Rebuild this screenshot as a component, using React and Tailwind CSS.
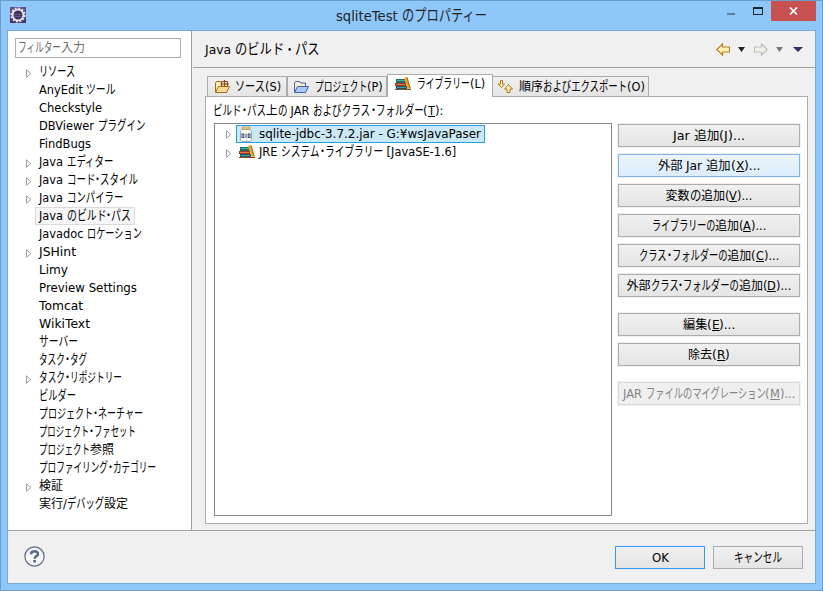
import { useLayoutEffect, useRef } from "react";

const kindOf = (s, wideDot) =>
  s === "・" ? (wideDot ? "k" : "d")
  : /^[\u3040-\u30ff]/.test(s) ? "k"
  : /^[\u4e00-\u9fff]/.test(s) ? "h" : "l";

const DOT = 5;

// Text set to a given advance width; kana runs are narrowed before anything else.
function Fit({ text, w, latin = 0.95, wideDot = false, className = "" }) {
  const ref = useRef(null);
  const runs = text.match(/・|[\u3040-\u30fa\u30fc-\u30ff]+|[\u4e00-\u9fff]+|_.|[^\u3040-\u30ff\u4e00-\u9fff_]+/g);
  useLayoutEffect(() => {
    const data = [...ref.current.children].map((o, i) => {
      o.style.width = "auto";
      o.firstChild.style.transform = "none";
      return { o, kind: kindOf(runs[i], wideDot), n: o.firstChild.getBoundingClientRect().width };
    });
    const sum = (k) => data.filter((d) => d.kind === k).reduce((a, d) => a + d.n, 0);
    const K = sum("k"), H = sum("h"), L = sum("l");
    const dots = data.filter((d) => d.kind === "d").length * DOT;
    const scale = K > 0
      ? { k: (w - dots - H - L * latin) / K, h: 1, l: latin }
      : { k: 1, h: w / (H + L), l: w / (H + L) };
    data.forEach(({ o, kind, n }) => {
      const s = kind === "d" ? DOT / n : scale[kind];
      o.style.width = n * s + "px";
      o.firstChild.style.transform = `scaleX(${s})`;
    });
  }, [text, w, latin, wideDot]);
  return (
    <span ref={ref} className={"inline-flex shrink-0 items-baseline whitespace-pre " + className}>
      {runs.map((r, i) => (
        <span key={i} className="inline-block">
          <span
            className={
              "inline-block origin-left " +
              (r[0] === "_" ? "underline underline-offset-1 " : "") +
              (kindOf(r) === "k" ? "text-[1.1em]" : "") +
              (kindOf(r, wideDot) === "d" ? "[font-feature-settings:'halt']" : "")
            }
          >
            {r.replace("_", "")}
          </span>
        </span>
      ))}
    </span>
  );
}

const tree = [
  ["リソース", 36, 1], ["AnyEdit ツール", 77], ["Checkstyle", 63], ["DBViewer プラグイン", 106],
  ["FindBugs", 52], ["Java エディター", 74, 1], ["Java コード・スタイル", 99, 1],
  ["Java コンパイラー", 84, 1], ["Java のビルド・パス", 92, 0, 1], ["Javadoc ロケーション", 103],
  ["JSHint", 37, 1], ["Limy", 29], ["Preview Settings", 98], ["Tomcat", 44], ["WikiText", 51],
  ["サーバー", 39], ["タスク・タグ", 48], ["タスク・リポジトリー", 83, 1], ["ビルダー", 37],
  ["プロジェクト・ネーチャー", 104], ["プロジェクト・ファセット", 97], ["プロジェクト参照", 75],
  ["プロファイリング・カテゴリー", 117], ["検証", 24, 1], ["実行/デバッグ設定", 89],
];

function Twisty() {
  return (
    <svg width="6" height="9" viewBox="0 0 6 9" className="shrink-0">
      <path d="M.5 .8v7.4L4.8 4.5z" fill="#fff" stroke="#a0a0a0" />
    </svg>
  );
}

function EclipseIcon() {
  return (
    <svg width="16" height="16" viewBox="0 0 16 16">
      <rect width="16" height="16" fill="#5f4d8c" />
      <path d="M0 11h16v5H0z" fill="#47336f" />
      <circle cx="8" cy="8" r="6.8" fill="none" stroke="#e6e4e4" strokeWidth="1.6" strokeDasharray="2 1.56" />
      <circle cx="8" cy="8" r="5.4" fill="#3b3162" stroke="#e8e6e2" strokeWidth="1.8" />
      <path d="M4 7.500h8M4.500 9.500h7" stroke="#665d92" strokeWidth="1" />
    </svg>
  );
}

function Folder({ blue, pack }) {
  const edge = blue ? "#4a62a5" : "#a8691c";
  return (
    <svg width="16" height="16" viewBox="0 0 16 16" className="shrink-0">
      <path d="M1.500 13V4l1-1.500h4l1 1.500h5v9z" fill={blue ? "#f6efcf" : "#fdeec0"} stroke={edge} />
      {pack && (
        <g>
          <path d="M7.500 2.500h6v5h-6z" fill="#f6d79a" stroke="#7e4a2c" />
          <path d="M10.500 1v7M6.500 5H15" stroke="#7e4a2c" />
        </g>
      )}
      <path d="M1.500 13.500L4.500 7.500h11l-3 6z" fill={blue ? "#a9c9f4" : "#fbdc95"} stroke={edge} />
    </svg>
  );
}

function Books() {
  return (
    <svg width="16" height="14" viewBox="0 0 16 14" className="shrink-0">
      <path d="M1 2h10v4H1z" fill="#1d7068" />
      <path d="M2 3h8v1H2z" fill="#4fae9c" />
      <path d="M0 6h11v3H0z" fill="#a8341c" />
      <path d="M1 7h9v1H1z" fill="#e07a4a" />
      <path d="M1 9h11v3H1z" fill="#1c5a66" />
      <path d="M2 10h9v1H2z" fill="#4d9c9c" />
      <path d="M9 1l3-1 3.500 11.500-3 .5z" fill="#eda52e" />
      <path d="M12 .5l3.200 11" stroke="#a35d10" />
      <path d="M0 12h16v1H0z" fill="#8a4a26" />
    </svg>
  );
}

function Jar() {
  return (
    <svg width="14" height="16" viewBox="0 0 14 16" className="shrink-0">
      <path d="M3 3.500h8l1.500 2v8.500l-1.500 1.500H3L1.500 14V5.500z" fill="#fbfbf6" stroke="#9aa7b8" />
      <path d="M3 1h8v2H3z" fill="#f0d58c" stroke="#c49c48" strokeWidth=".8" />
      <g fill="none" stroke="#24365c" strokeWidth=".9">
        <rect x="3" y="8" width="1.800" height="3.500" />
        <path d="M7 7.500V12" />
        <rect x="9.200" y="8" width="1.800" height="3.500" />
      </g>
    </svg>
  );
}

function OrderIcon() {
  return (
    <svg width="16" height="16" viewBox="0 0 16 16" className="shrink-0">
      <g fill="#fdeab0" stroke="#b87a1c">
        <path d="M3.500 1.500h2V5h2L4.500 8.500 1 5h2.500z" />
        <path d="M10 13.500h3V10h2.500L11.500 5.500 7.500 10H10z" />
      </g>
    </svg>
  );
}

function Arrow({ right }) {
  return (
    <svg width="14" height="13" viewBox="0 0 14 13" className={"shrink-0 " + (right ? "-scale-x-100" : "")}>
      <path d="M6.500 .9v3.100h7v5h-7v3.100L.8 6.500z" fill={right ? "#f2f2ec" : "#fdf0b8"} stroke={right ? "#bdbdb5" : "#b8801c"} strokeWidth="1.200" />
    </svg>
  );
}

function Caret({ color, size = 7 }) {
  return (
    <svg width={size} height="5" viewBox="0 0 8 5" preserveAspectRatio="none" className="shrink-0">
      <path d="M0 0h8L4 5z" fill={color} />
    </svg>
  );
}

const base = "flex shrink-0 items-center justify-center border ";
const grey = "border-[#acacac] bg-linear-to-b from-[#f0f0f0] to-[#e5e5e5] ";

function SideButton({ text, w, kind = "", gap = "mt-[7px]" }) {
  const look =
    kind === "hot" ? "border-[#7eb4ea] bg-linear-to-b from-[#ecf4fc] to-[#dcecfc]"
    : kind === "off" ? "border-[#d9d9d9] bg-[#efefef] text-[#838383]"
    : grey;
  return (
    <div className={base + "h-[23px] w-[182px] outline outline-[#f0f0f0] " + gap + " " + look}>
      <Fit text={text} w={w} />
    </div>
  );
}

function Tab({ icon, text, w, className }) {
  return (
    <div className={"flex shrink-0 items-center border border-b-0 border-[#acacac] " + className}>
      {icon}
      <Fit text={text} w={w} />
    </div>
  );
}

const idle = "h-5 bg-linear-to-b from-[#f0f0f0] to-[#e5e5e5] ";

export default function App() {
  return (
    <div className="flex h-[591px] w-[823px] flex-col overflow-hidden border border-[#6c9dcb] bg-[#8ec8fb] font-['DejaVu_Sans','Noto_Sans_CJK_JP',sans-serif] text-[12px] leading-[18px] text-black">
      <header className="flex h-[29px] shrink-0 items-start">
        <div className="mt-1.5 ml-[9px] w-[326px]"><EclipseIcon /></div>
        <Fit text="sqliteTest のプロパティー" w={151} latin={0.94} className="mt-1.5 text-[14px] text-[#222]" />
        <div className="ml-auto flex h-5 items-start">
          <div className="mt-3 mr-[18px] h-0.5 w-2 bg-[#5d7f9f]" />
          <div className="mt-1.5 mr-2 h-2 w-2.5 border border-t-2 border-[#1c2831]" />
          <div className="mr-1.5 flex h-5 w-[45px] items-center justify-center bg-[#c75050]">
            <svg width="9" height="8" viewBox="0 0 9 8"><path d="M1 .5l7 7M8 .5l-7 7" stroke="#fff" strokeWidth="1.700" /></svg>
          </div>
        </div>
      </header>
      <div className="mx-1.5 flex h-[554px] shrink-0 flex-col border border-[#78a9d9] bg-[#f0f0f0]">
        <div className="flex h-[500px] shrink-0 border-b border-[#a0a0a0]">
          <aside className="w-[184px] shrink-0 border-r border-[#a0a0a0] bg-white">
            <div className="mt-[7px] ml-[7px] flex h-5 w-[166px] items-center border border-[#abadb3] pl-0.5 text-[#6d6d6d]">
              <Fit text="フィルター入力" w={67} />
            </div>
            <div className="mt-[5px] flex flex-col">
              {tree.map(([t, w, open, sel]) => (
                <div key={t} className="flex h-[18px] items-center">
                  <div className="mt-0.5 ml-[18px] w-[9px]">{open ? <Twisty /> : null}</div>
                  <div className={"flex h-[18px] items-center border px-[3px] " + (sel ? "border-[#dadada] bg-[#f7f7f7]" : "border-transparent")}>
                    <Fit text={t} w={w} />
                  </div>
                </div>
              ))}
            </div>
          </aside>
          <main className="ml-px flex flex-1 flex-col">
            <div className="flex h-[37px] shrink-0 items-center border-b border-[#a0a0a0] pl-3">
              <Fit text="Java のビルド・パス" w={115} wideDot className="text-[13px]" />
              <div className="mr-3 ml-auto flex items-center">
                <Arrow /><div className="w-2" /><Caret color="#222" />
                <div className="w-[9px]" /><Arrow right /><div className="w-2" /><Caret color="#77757c" />
                <div className="w-[10px]" /><Caret color="#352c66" size={10} />
              </div>
            </div>
            <div className="mt-[6px] ml-[14px] flex h-[22px] shrink-0 items-end">
              <Tab icon={<Folder pack />} text="ソース(S)" w={46} className={idle + "w-[80px] gap-[5px] pl-[6px]"} />
              <Tab icon={<Folder blue />} text="プロジェクト(P)" w={68} className={idle + "w-[100px] gap-1.5 pl-[5px]"} />
              <Tab icon={<Books />} text="ライブラリー(L)" w={68} className="z-10 -mb-px h-[23px] w-[106px] gap-1.5 bg-white pb-1 pl-[7px]" />
              <Tab icon={<OrderIcon />} text="順序およびエクスポート(O)" w={126} className={idle + "w-[156px] gap-1.5 border-l-0 pl-1"} />
            </div>
            <div className="ml-3 flex h-[428px] w-[603px] shrink-0 flex-col border border-[#acacac] bg-white">
              <Fit text="ビルド・パス上の JAR およびクラス・フォルダー(_T):" w={230} className="mt-[5px] ml-[7px] h-[18px]" />
              <div className="mt-[3px] ml-2 flex">
                <div className="h-[393px] w-[398px] shrink-0 border border-[#828790]">
                  <div className="flex h-[19px] items-center">
                    <div className="mt-0.5 ml-[11px] w-[10px]"><Twisty /></div>
                    <div className="flex h-[18px] w-[249px] items-center gap-1.5 border border-[#26a0da] bg-[#cbe8f6] pl-[2px]">
                      <Jar />
                      <Fit text="sqlite-jdbc-3.7.2.jar - G:¥wsJavaPaser" w={222} />
                    </div>
                  </div>
                  <div className="flex h-[18px] items-center">
                    <div className="mt-0.5 ml-[11px] w-[13px]"><Twisty /></div>
                    <Books />
                    <Fit text="JRE システム・ライブラリー [JavaSE-1.6]" w={197} className="ml-1" />
                  </div>
                </div>
                <div className="ml-1.5 flex flex-col">
                  <SideButton text="Jar 追加(_J)..." w={72} gap="mt-px" />
                  <SideButton text="外部 Jar 追加(_X)..." w={103} kind="hot" />
                  <SideButton text="変数の追加(_V)..." w={87} />
                  <SideButton text="ライブラリーの追加(_A)..." w={115} />
                  <SideButton text="クラス・フォルダーの追加(_C)..." w={140} />
                  <SideButton text="外部クラス・フォルダーの追加(_D)..." w={165} />
                  <SideButton text="編集(_E)..." w={53} gap="mt-4" />
                  <SideButton text="除去(_R)" w={42} />
                  <SideButton text="JAR ファイルのマイグレーション(_M)..." w={172} kind="off" gap="mt-4" />
                </div>
              </div>
            </div>
          </main>
        </div>
        <footer className="flex flex-1 items-start pt-[15px] pr-3 pl-4">
          <svg width="21" height="21" viewBox="0 0 21 21">
            <circle cx="10.500" cy="10.500" r="9.600" fill="#f7f7f7" stroke="#5d6c8c" strokeWidth="1.200" />
            <path d="M7 8.300C7 4.500 14 4.400 14 8c0 2.300-3.400 2.400-3.400 4.800" fill="none" stroke="#52658c" strokeWidth="2.500" />
            <rect x="9.300" y="14" width="2.600" height="2.500" fill="#52658c" />
          </svg>
          <div className={base + "ml-auto h-[23px] w-[90px] border-[#3399ff] bg-linear-to-b from-[#f0f0f0] to-[#e5e5e5]"}><Fit text="OK" w={17} /></div>
          <div className={base + grey + "ml-2 h-[23px] w-[90px]"}><Fit text="キャンセル" w={48} /></div>
        </footer>
      </div>
    </div>
  );
}
